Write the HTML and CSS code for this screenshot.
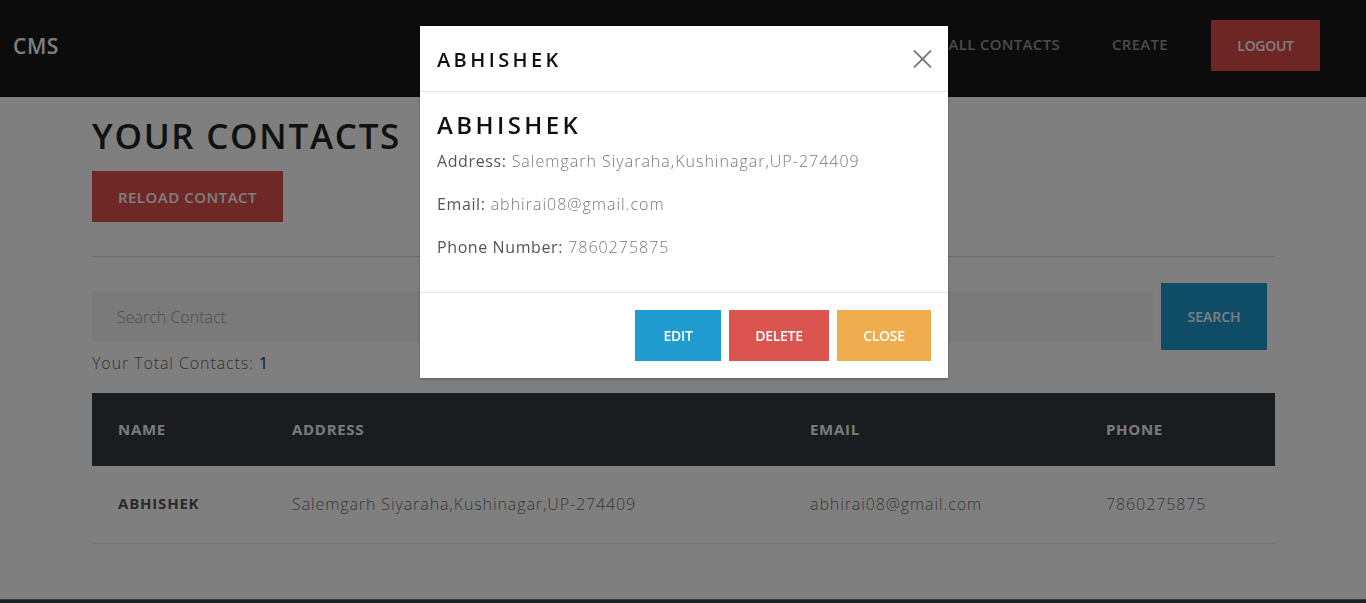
FILE: index.html
```html
<!DOCTYPE html>
<html lang="en">
<head>
<meta charset="utf-8">
<title>CMS - Your Contacts</title>
<link rel="stylesheet" href="styles.css">
</head>
<body>
<nav class="navbar">
  <a class="brand" href="#">CMS</a>
  <div class="nav-links">
    <a class="nav-link" href="#">All Contacts</a>
    <a class="nav-link" href="#">Create</a>
    <a class="btn btn-logout" href="#">Logout</a>
  </div>
</nav>

<main class="container">
  <h1 class="page-title">Your Contacts</h1>
  <button class="btn btn-reload">Reload Contact</button>
  <hr class="divider">
  <div class="search-row">
    <input class="search-input" type="text" placeholder="Search Contact">
    <button class="btn btn-search">Search</button>
  </div>
  <p class="total">Your Total Contacts: <span class="count">1</span></p>
  <table class="contacts">
    <thead>
      <tr>
        <th class="c-name">Name</th>
        <th class="c-address">Address</th>
        <th class="c-email">Email</th>
        <th class="c-phone">Phone</th>
      </tr>
    </thead>
    <tbody>
      <tr>
        <td class="c-name name-cell">Abhishek</td>
        <td class="c-address">Salemgarh Siyaraha,Kushinagar,UP-274409</td>
        <td class="c-email">abhirai08@gmail.com</td>
        <td class="c-phone">7860275875</td>
      </tr>
    </tbody>
  </table>
</main>

<footer class="footer"></footer>

<div class="backdrop"></div>
<div class="modal-wrap">
  <div class="modal">
    <div class="modal-header">
      <h4 class="modal-title">Abhishek</h4>
      <button class="modal-close" aria-label="Close">
        <svg width="19" height="18" viewBox="0 0 19 18"><path d="M1 0.5 L18 17.5 M18 0.5 L1 17.5" stroke="#7a7a7a" stroke-width="1.8" fill="none"/></svg>
      </button>
    </div>
    <div class="modal-body">
      <h3 class="contact-name">Abhishek</h3>
      <p><span class="label">Address:</span> Salemgarh Siyaraha,Kushinagar,UP-274409</p>
      <p><span class="label">Email:</span> abhirai08@gmail.com</p>
      <p><span class="label">Phone Number:</span> 7860275875</p>
    </div>
    <div class="modal-footer">
      <button class="btn btn-edit">Edit</button>
      <button class="btn btn-delete">Delete</button>
      <button class="btn btn-close">Close</button>
    </div>
  </div>
</div>
</body>
</html>
```

FILE: styles.css
```css
* { box-sizing: border-box; }

html, body {
  margin: 0;
  padding: 0;
}

body {
  font-family: "Open Sans", "Liberation Sans", sans-serif;
  font-weight: 300;
  font-size: 16px;
  color: #666;
  background: #fff;
  min-height: 603px;
  overflow: hidden;
}

a { text-decoration: none; }

.btn {
  display: inline-flex;
  align-items: center;
  justify-content: center;
  border: none;
  font-family: "Open Sans", "Liberation Sans", sans-serif;
  font-weight: 600;
  font-size: 14px;
  text-transform: uppercase;
  color: #fff;
  cursor: pointer;
  padding: 0 25px;
  height: 51px;
}

/* Navbar */
.navbar {
  height: 97px;
  background: #181818;
  display: flex;
  align-items: center;
  justify-content: space-between;
  padding: 0 46px 5px 13px;
}

.brand {
  color: #fdfdfd;
  font-weight: 600;
  font-size: 21px;
  letter-spacing: 0.6px;
  margin-top: -1px;
}

.nav-links {
  display: flex;
  align-items: center;
}

.nav-link {
  color: #969696;
  font-weight: 600;
  font-size: 15px;
  text-transform: uppercase;
  letter-spacing: 0.3px;
  padding: 0 26px;
  margin-top: -5px;
}

.btn-logout {
  background: #dc4d49;
  width: 109px;
  margin-left: 17px;
  padding: 0;
  letter-spacing: -0.3px;
  margin-top: -1px;
}

/* Main */
.container {
  padding: 0 91px 0 92px;
}

.page-title {
  margin: 14px 0 11px;
  font-size: 35px;
  font-weight: 600;
  line-height: 49px;
  letter-spacing: 1.7px;
  text-transform: uppercase;
  color: #222;
}

.btn-reload {
  background: #dd504d;
  width: 191px;
  padding: 0;
  font-size: 15px;
  letter-spacing: 0.5px;
}

.divider {
  border: none;
  border-top: 1px solid #dcdcdc;
  margin: 34px 0 26px;
}

.search-row {
  display: flex;
  align-items: center;
  height: 67px;
}

.search-input {
  flex: 1;
  height: 51px;
  border: none;
  outline: none;
  background: #f4f4f4;
  padding: 0 25px;
  font-family: "Open Sans", "Liberation Sans", sans-serif;
  font-weight: 300;
  font-size: 16px;
  color: #666;
}

.search-input::placeholder {
  color: #9c9c9c;
}

.btn-search {
  background: #1f9bcf;
  width: 106px;
  height: 67px;
  padding: 0;
  margin: 0 8px;
  letter-spacing: 0;
}

.total {
  margin: 1px 0 18px;
  line-height: 24px;
  letter-spacing: 0.9px;
  color: #666;
}

.total .count {
  font-weight: 400;
  color: #2a2a2a;
}

/* Table */
.contacts {
  width: 100%;
  border-collapse: collapse;
}

.contacts th {
  background: #343a40;
  color: #f4f4f4;
  height: 73px;
  text-align: left;
  font-weight: 700;
  font-size: 15px;
  text-transform: uppercase;
  letter-spacing: 0.7px;
  padding: 0 0 2px 26px;
}

.contacts td {
  height: 77px;
  border-bottom: 1px solid #eaeaea;
  padding: 0 0 0 26px;
  font-size: 16px;
  letter-spacing: 0.9px;
  color: #6e6e6e;
}

.contacts td.name-cell {
  font-weight: 700;
  font-size: 15px;
  text-transform: uppercase;
  letter-spacing: 0.8px;
  color: #555;
  padding-bottom: 2px;
}

.c-name { width: 174px; }
.c-address { width: 518px; }
.c-email { width: 296px; }

.footer {
  position: fixed;
  left: 0;
  right: 0;
  bottom: 0;
  height: 4px;
  background: #38434f;
  border-top: 1px solid #6c737a;
}

/* Modal */
.backdrop {
  position: fixed;
  inset: 0;
  background: rgba(0, 0, 0, 0.5);
}

.modal-wrap {
  position: fixed;
  inset: 0;
  display: flex;
  justify-content: center;
  align-items: flex-start;
  padding: 26px 0 0 2px;
}

.modal {
  width: 528px;
  background: #fff;
  box-shadow: 0 1px 3px rgba(0, 0, 0, 0.3);
}

.modal-header {
  height: 66px;
  display: flex;
  align-items: center;
  justify-content: space-between;
  padding: 0 16px 0 17px;
  border-bottom: 1px solid #e5e5e5;
}

.modal-title {
  margin: 2px 0 0;
  font-size: 20px;
  font-weight: 600;
  letter-spacing: 3.4px;
  text-transform: uppercase;
  color: #111;
  line-height: 28px;
}

.modal-close {
  background: none;
  border: none;
  padding: 0;
  width: 19px;
  height: 18px;
  display: flex;
  margin-top: 1px;
}

.modal-body {
  padding: 18px 17px 14px;
}

.contact-name {
  margin: 0 0 9px;
  font-size: 24px;
  font-weight: 600;
  line-height: 30px;
  letter-spacing: 3.4px;
  text-transform: uppercase;
  color: #111;
}

.modal-body p {
  margin: 0 0 18px;
  line-height: 25px;
  font-size: 16px;
  letter-spacing: 1px;
  color: #777;
}

.modal-body .label {
  color: #555;
  font-weight: 400;
  letter-spacing: 0.6px;
}

.modal-footer {
  border-top: 1px solid #e5e5e5;
  display: flex;
  justify-content: flex-end;
  gap: 8px;
  padding: 17px 17px 17px;
}

.btn-edit { background: #209cd0; width: 86px; padding: 0; letter-spacing: -0.3px; }
.btn-delete { background: #db5450; width: 100px; padding: 0; letter-spacing: -0.3px; }
.btn-close { background: #efad4e; width: 94px; padding: 0; letter-spacing: -0.3px; }
```
